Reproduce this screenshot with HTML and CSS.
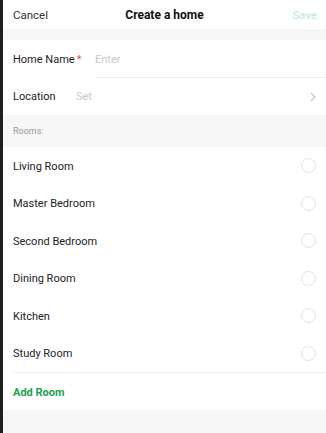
FILE: index.html
```html
<!DOCTYPE html>
<html>
<head>
<meta charset="utf-8">
<link rel="stylesheet" href="styles.css">
</head>
<body>
<div class="edge"></div>
<div class="app">
  <header class="nav">
    <span class="nav-cancel">Cancel</span>
    <span class="nav-title">Create a home</span>
    <span class="nav-save">Save</span>
  </header>
  <div class="gap"></div>
  <section class="group">
    <div class="field">
      <span class="field-label">Home Name<span class="req">*</span></span>
      <span class="field-input">Enter</span>
    </div>
    <div class="field field-loc">
      <span class="field-label loc-label">Location</span>
      <span class="field-input">Set</span>
      <svg class="chev" width="6" height="10" viewBox="0 0 6 10"><path d="M1 1 L5 5 L1 9" fill="none" stroke="#c4c4c4" stroke-width="1.1"/></svg>
    </div>
  </section>
  <div class="section-head">Rooms:</div>
  <section class="rooms">
    <div class="room"><span>Living Room</span><i class="radio"></i></div>
    <div class="room"><span>Master Bedroom</span><i class="radio"></i></div>
    <div class="room"><span>Second Bedroom</span><i class="radio"></i></div>
    <div class="room"><span>Dining Room</span><i class="radio"></i></div>
    <div class="room"><span>Kitchen</span><i class="radio"></i></div>
    <div class="room room-last"><span>Study Room</span><i class="radio"></i></div>
    <div class="add">Add Room</div>
  </section>
  <div class="bottom"></div>
</div>
</body>
</html>
```
FILE: styles.css
```css
html, body {
  margin: 0;
  padding: 0;
  height: 100%;
}
body {
  display: flex;
  background: #f7f7f7;
  font-family: Roboto, "Noto Sans", sans-serif;
  color: #222;
  overflow: hidden;
}
.edge {
  width: 3px;
  flex: none;
  background: #1f1f1f;
}
.app {
  flex: 1;
  display: flex;
  flex-direction: column;
  background: #f7f7f7;
}
.nav {
  height: 29px;
  background: #fff;
  display: flex;
  align-items: center;
  justify-content: space-between;
  padding: 0 9px 0 10px;
  position: relative;
}
.nav-cancel {
  font-size: 11.5px;
  color: #333;
}
.nav-title {
  position: absolute;
  left: 0;
  right: 0;
  text-align: center;
  font-size: 12px;
  font-weight: 700;
  color: #111;
  pointer-events: none;
}
.nav-save {
  font-size: 11.5px;
  font-weight: 500;
  color: #c6ecd5;
}
.gap {
  height: 11px;
}
.group {
  background: #fff;
}
.field {
  height: 37px;
  display: flex;
  align-items: center;
  padding-left: 10px;
  font-size: 11px;
}
.field:first-child {
  height: 38px;
  padding-top: 1px;
  box-sizing: border-box;
}
.field-label {
  width: 82px;
  flex: none;
  color: #222;
}
.req {
  color: #f04a3e;
  margin-left: 2px;
}
.field-input {
  flex: 1;
  color: #c8c8c8;
  align-self: stretch;
  display: flex;
  align-items: center;
  border-bottom: 1px solid #efefef;
}
.field-loc .field-input {
  border-bottom: 0;
}
.loc-label {
  width: 63px;
}
.chev {
  margin-right: 10px;
}
.section-head {
  height: 32px;
  display: flex;
  align-items: center;
  padding-left: 10px;
  font-size: 9px;
  color: #999;
}
.rooms {
  background: #fff;
  padding-left: 10px;
}
.room {
  height: 37.5px;
  display: flex;
  align-items: center;
  justify-content: space-between;
  padding: 1px 10px 0 0;
  box-sizing: border-box;
  font-size: 11px;
  color: #222;
}
.room-last {
  height: 38.5px;
  border-bottom: 1px solid #efefef;
}
.radio {
  width: 13px;
  height: 13px;
  border: 1px solid #e2e2e2;
  border-radius: 50%;
  box-sizing: content-box;
  margin-top: -1px;
}
.add {
  height: 37px;
  display: flex;
  align-items: center;
  padding-top: 1px;
  box-sizing: border-box;
  font-size: 11px;
  font-weight: 700;
  color: #1aa450;
}
.bottom {
  flex: 1;
}
```
